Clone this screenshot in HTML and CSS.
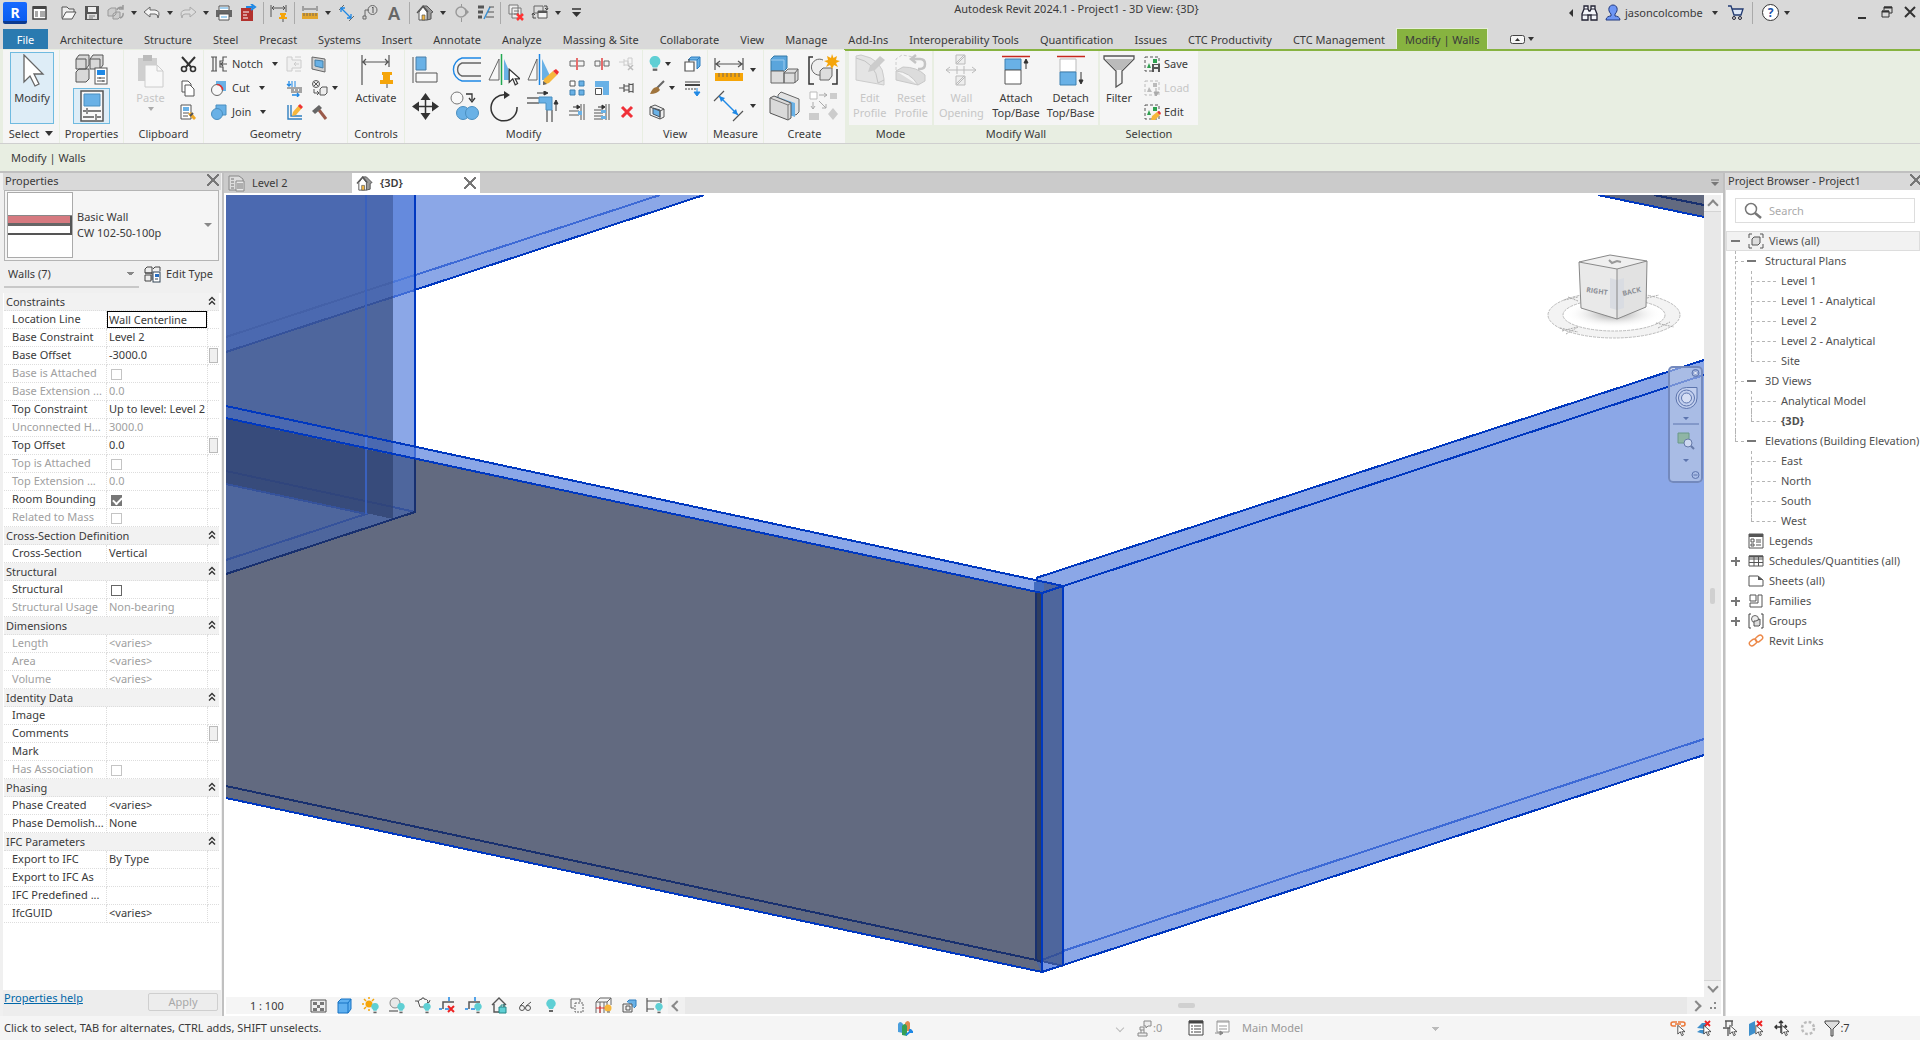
FILE: index.html
```html
<!DOCTYPE html>
<html lang="en">
<head>
  <meta charset="UTF-8">
  <title>Autodesk Revit 2024.1 - Project1 - 3D View: {3D}</title>
  <link rel="stylesheet" href="styles.css">
</head>
<body>
  <svg class="sprite" aria-hidden="true">
    <symbol id="cursor" viewBox="0 0 10 15"><path d="M1 1v11l3-3 2 5 2-1-2-4h4z" fill="#fff" stroke="#333"/></symbol>
    <symbol id="bulb" viewBox="0 0 10 14"><path d="M5 0a4.5 4.5 0 0 1 3 8l-1 2H3L2 8a4.5 4.5 0 0 1 3-8z" fill="#5fcfd4"/><path d="M3 11h4v2H3z" fill="#666"/></symbol>
    <symbol id="house" viewBox="0 0 18 18"><path d="M7 2h4l6 6-2 1v6l-4 1V8z" fill="#999" stroke="#555"/><path d="M3 8v8h8V8L7 3z" fill="#fff" stroke="#555"/><path d="M1 9l6-7 5 6" fill="none" stroke="#555" stroke-width="1.3"/><path d="M6 11h3v5H6z" fill="#f5b942" stroke="#555" stroke-width=".7"/></symbol>
    <symbol id="up2" viewBox="0 0 8 10"><path d="M1 4.5l3-3 3 3M1 8.5l3-3 3 3" fill="none" stroke="#333" stroke-width="1.4"/></symbol>
  </svg>

  <header class="titlebar">
    <nav class="qat">
      <button class="logo" aria-label="Revit">R</button>
      <button class="q" aria-label="Home"><svg width="15" height="15"><path d="M1 2h13v12H1z" fill="#fff" stroke="#444" stroke-width="1.5"/><path d="M1 1h13v3H1z" fill="#444"/><path d="M3 7h3M3 9h3M3 11h3M8 7h5M8 9h5M8 11h5" stroke="#555"/></svg></button>
      <button class="q q-first" aria-label="Open"><svg width="17" height="16"><path d="M2 13V2h5l2 2h5v3" fill="#eee" stroke="#555"/><path d="M2 14l4-7h10l-4 7z" fill="#f8f8f8" stroke="#555"/></svg></button>
      <button class="q" aria-label="Save"><svg width="16" height="16"><path d="M1 1h14v14H1z" fill="#555"/><path d="M4 2h8v5H4z" fill="#eee"/><path d="M3 9h10v5H3z" fill="#ddd"/><path d="M5 11h6M5 13h4" stroke="#777"/></svg></button>
      <button class="q" aria-label="Synchronize"><svg width="18" height="16"><path d="M1 5l3-2h5v6l-2 2H1zM6 9l3-2h4v5l-2 2H6z" fill="#ccc" stroke="#999"/><path d="M10 5a4 4 0 0 1 6-2M16 0v4h-4M16 8a4 4 0 0 1-3 5" fill="none" stroke="#999" stroke-width="1.5"/></svg></button>
      <button class="caret" aria-label="Synchronize options"></button>
      <button class="q" aria-label="Undo"><svg width="18" height="14"><path d="M7 1L1 6l6 5V8h5q3 0 3 4 3-7-3-8H7z" fill="#f4f4f4" stroke="#666"/></svg></button>
      <button class="caret" aria-label="Undo options"></button>
      <button class="q" aria-label="Redo"><svg width="18" height="14"><path d="M11 1l6 5-6 5V8H6q-3 0-3 4-3-7 3-8h5z" fill="#ddd" stroke="#aaa"/></svg></button>
      <button class="caret" aria-label="Redo options"></button>
      <button class="q" aria-label="Print"><svg width="18" height="16"><path d="M4 1h10v5H4z" fill="#fff" stroke="#555"/><path d="M1 5h16v7H1z" fill="#666"/><path d="M4 9h10v6H4z" fill="#fff" stroke="#555"/><path d="M5 3h8M6 12h6" stroke="#4aa3e0"/></svg></button>
      <button class="q" aria-label="Export PDF"><svg width="17" height="18"><path d="M1 4h10l2 2v11H1z" fill="#b3312d"/><path d="M3 8h6M3 11h4M3 14h5" stroke="#fff"/><path d="M6 3h7M11 0l4 3-4 3" stroke="#1e88e5" fill="none" stroke-width="2"/></svg></button>
      <i class="sep"></i>
      <button class="q" aria-label="Activate Controls"><svg width="18" height="18"><path d="M1 1v12M16 1v7M2 4h13M4 2L2 4l2 2M13 2l2 2-2 2" fill="none" stroke="#555"/><path d="M10 9h6v2h-1v2h2v2H9v-2h2v-2h-1z" fill="#f5a50a"/><path d="M13 15v3" stroke="#555"/></svg></button>
      <i class="sep"></i>
      <button class="q" aria-label="Measure"><svg width="16" height="15"><path d="M1 1v5M15 1v5M2 4h12" stroke="#666"/><path d="M0 8h16v6H0z" fill="#e3a62c"/><path d="M2 8v3M5 8v3M8 8v3M11 8v3M14 8v3" stroke="#765"/></svg></button>
      <button class="caret" aria-label="Measure options"></button>
      <button class="q" aria-label="Aligned Dimension"><svg width="17" height="18"><path d="M1 6l5-5M11 17l5-5" stroke="#666"/><path d="M3 4l10 10M3 8V4h4M9 14h4v-4" fill="none" stroke="#1e88e5" stroke-width="1.3"/></svg></button>
      <button class="q" aria-label="Tag"><svg width="16" height="16"><path d="M1 11h3v3H1zM3 11V5h4" fill="none" stroke="#666"/><circle cx="10.5" cy="5" r="4.5" fill="none" stroke="#666"/><path d="M10 3l1-1v6" fill="none" stroke="#555"/></svg></button>
      <button class="q glyph-a" aria-label="Text">A</button>
      <i class="sep"></i>
      <button class="q" aria-label="Default 3D View"><svg width="18" height="18"><use href="#house"/></svg></button>
      <button class="caret" aria-label="3D View options"></button>
      <button class="q" aria-label="Section"><svg width="15" height="18"><path d="M7.5 0v3M7.5 14v4" stroke="#999"/><circle cx="7" cy="8" r="5" fill="none" stroke="#999" stroke-width="1.4"/><path d="M11 4l4 4-4 4z" fill="#999"/></svg></button>
      <button class="q" aria-label="Thin Lines"><svg width="17" height="16"><path d="M1 2h6M1 7h5M1 12h4" stroke="#555" stroke-width="3"/><path d="M7 14L13 2" stroke="#3a8fd0" stroke-width="1.5"/><path d="M12 2h5M11 7h6M9 12h8" stroke="#555"/></svg></button>
      <i class="sep"></i>
      <button class="q" aria-label="Close Inactive Views"><svg width="17" height="17"><path d="M1 1h9v9H1zM4 4h9v10H4z" fill="#eee" stroke="#777"/><path d="M6 7h5M6 10h5" stroke="#777"/><path d="M9 10l6 6M15 10l-6 6" stroke="#f33" stroke-width="2.5"/></svg></button>
      <button class="q" aria-label="Switch Windows"><svg width="18" height="17"><path d="M3 2h9v7H3z" fill="#ddd" stroke="#666"/><path d="M7 7h9v7H7z" fill="#f5f5f5" stroke="#555"/><path d="M7 7h9v2H7z" fill="#555"/><path d="M13 2h3v3M2 10v4h3M1 11l1-2 2 2M14 4l2 2 1-2" fill="none" stroke="#444"/></svg></button>
      <button class="caret" aria-label="Window list"></button>
      <button class="q" aria-label="Customize"><svg width="9" height="9"><path d="M0 1h9" stroke="#333" stroke-width="1.5"/><path d="M0 4h9L4.5 9z" fill="#333"/></svg></button>
    </nav>
    <h1>Autodesk Revit 2024.1 - Project1 - 3D View: {3D}</h1>
    <div class="account">
      <button class="left-tri" aria-label="Collapse search"></button>
      <button class="acc-icon" aria-label="Search"><svg width="17" height="16"><path d="M1 15V9l2-5V1h4v3l1 2h1l1-2V1h4v3l2 5v6h-6v-5H7v5z" fill="#f4f6fa" stroke="#223" stroke-width="1.3"/><path d="M3 4h4M10 4h4M1 10h6M10 10h6" stroke="#223"/></svg></button>
      <button class="acc-icon" aria-label="Profile"><svg width="16" height="17"><path d="M1 16c0-3 3-4 5-4v-2C2 6 4 1 8 1s6 5 2 9v2c2 0 5 1 5 4z" fill="#6e96f5" stroke="#223a80"/></svg></button>
      <button class="user">jasoncolcombe</button>
      <button class="caret small" aria-label="Account menu"></button>
      <button class="acc-icon cart" aria-label="App Store"><svg width="17" height="16"><path d="M1 1h3l3 9h7l2-6H5" fill="#dce6f6" stroke="#223a70" stroke-width="1.3"/><circle cx="7" cy="13" r="1.5" fill="none" stroke="#223"/><circle cx="13" cy="13" r="1.5" fill="none" stroke="#223"/></svg></button>
      <i class="sep"></i>
      <button class="acc-icon help" aria-label="Help">?</button>
      <button class="caret small" aria-label="Help menu"></button>
      <div class="winbtns">
        <button aria-label="Minimize"><svg width="12" height="14"><path d="M2 12h8" stroke="#333" stroke-width="2"/></svg></button>
        <button aria-label="Restore"><svg width="12" height="12"><path d="M3 4V1h8v6H8" fill="none" stroke="#333"/><path d="M1 5h7v6H1z" fill="none" stroke="#333"/><path d="M3 1.5h8M1 5.5h7" stroke="#333" stroke-width="2"/></svg></button>
        <button aria-label="Close"><svg width="12" height="12"><path d="M1 1l10 10M11 1L1 11" stroke="#333" stroke-width="2"/></svg></button>
      </div>
    </div>
  </header>

  <nav class="tabs">
    <button class="file">File</button>
    <button>Architecture</button><button>Structure</button><button>Steel</button><button>Precast</button><button>Systems</button><button>Insert</button><button>Annotate</button><button>Analyze</button><button>Massing &amp; Site</button><button>Collaborate</button><button>View</button><button>Manage</button><button>Add-Ins</button><button>Interoperability Tools</button><button>Quantification</button><button>Issues</button><button>CTC Productivity</button><button>CTC Management</button>
    <button class="current">Modify | Walls</button>
    <button class="minimize" aria-label="Minimize ribbon"><svg width="15" height="9"><rect x=".5" y=".5" width="14" height="8" rx="2" fill="#f5f5f5" stroke="#444"/><path d="M5 6l2.5-3L10 6z" fill="#333"/></svg></button>
    <button class="caret small" aria-label="Ribbon options"></button>
  </nav>

  <section class="ribbon">
    <div class="panel p-select">
      <div class="tools">
        <button class="big on"><svg width="32" height="34"><path d="M8 1v27l6-6 5 10 4-2-5-10h9z" fill="#fff" stroke="#666" stroke-width="1.3"/></svg><span>Modify</span></button>
      </div>
      <h2>Select <i class="tri"></i></h2>
    </div>
    <div class="panel p-props">
      <div class="tools stack">
        <button aria-label="Type Properties"><svg width="34" height="32"><g fill="#d8d8d8" stroke="#555"><path d="M1 5l3-4h10v10l-3 4H1zM15 5l3-4h10v10l-3 4H15zM1 18l3-3h10v10l-3 3H1z"/><path d="M1 5h10v10M15 5h10v9" fill="none"/><rect x="20" y="14" width="12" height="16" fill="#fff"/></g><path d="M22 16h8v5h-8z" fill="#1e88e5"/><path d="M22 24h8M22 27h8M25 23v2M28 26v2" stroke="#555"/></svg></button>
        <button class="on wide" aria-label="Properties"><svg width="26" height="32"><path d="M2 1h22v30H2z" fill="#f8f8f8" stroke="#555" stroke-width="1.5"/><path d="M5 4h16v12H5z" fill="#69b1e6" stroke="#4a8fc0"/><path d="M4 21h3M9 21h13M8 18v6M4 27h11M18 27h4M17 24v6" stroke="#555" stroke-width="1.3"/></svg></button>
      </div>
      <h2>Properties</h2>
    </div>
    <div class="panel p-clip">
      <div class="tools">
        <button class="big paste" disabled><svg width="28" height="34"><path d="M1 4h19v23H1z" fill="#cfcfcf"/><path d="M6 1h9v6H6z" fill="#bbb"/><path d="M8 11h12l6 6v16H8z" fill="#f8f8f8" stroke="#ccc"/><path d="M20 11v6h6" fill="none" stroke="#ccc"/></svg><span>Paste</span><i class="down"></i></button>
        <div class="col">
          <button aria-label="Cut to Clipboard"><svg width="17" height="17"><path d="M2 1l9 10M15 1L6 11" stroke="#333" stroke-width="2"/><circle cx="4" cy="13" r="2.5" fill="none" stroke="#333" stroke-width="1.6"/><circle cx="13" cy="13" r="2.5" fill="none" stroke="#333" stroke-width="1.6"/></svg></button>
          <button aria-label="Copy"><svg width="14" height="17"><path d="M1 1h6l3 3v8H1z" fill="#fff" stroke="#555"/><path d="M4 5h5l4 4v7H4z" fill="#fff" stroke="#555"/></svg></button>
          <button aria-label="Match Type"><svg width="17" height="17"><path d="M1 1h10v14H1z" fill="#fff" stroke="#555"/><path d="M3 3h6v4H3z" fill="#69b1e6"/><path d="M3 9h6M3 12h5" stroke="#555"/><path d="M8 10l3-2 5 6-2 2z" fill="#f0a928"/><path d="M13 9l-3 3" stroke="#555" stroke-width="2"/></svg></button>
        </div>
      </div>
      <h2>Clipboard</h2>
    </div>
    <div class="panel p-geom">
      <div class="tools">
        <div class="col labelled">
          <button><svg width="18" height="17"><path d="M1 1h6M1 15h6M3 1v14M6 1v14M17 1h-4v4h-3v6h3v4h4M17 8h-6M13 6l-2 2 2 2" fill="none" stroke="#555" stroke-width="1.2"/></svg><span>Notch</span><i class="down"></i></button>
          <button><svg width="18" height="17"><path d="M6 1h10v10h-4a5 5 0 0 0-6-5z" fill="#69b1e6"/><circle cx="7" cy="10" r="5.5" fill="#f8f8f8" stroke="#666"/><path d="M7 4.5a5.5 5.5 0 0 1 5.5 5.5" fill="none" stroke="#d33" stroke-width="1.6"/></svg><span>Cut</span><i class="down"></i></button>
          <button><svg width="18" height="17"><path d="M6 1h10v10H6z" fill="#69b1e6" stroke="#4a8fc0"/><circle cx="7" cy="10" r="5.5" fill="#69b1e6" stroke="#4a8fc0"/></svg><span>Join</span><i class="down"></i></button>
        </div>
        <div class="col">
          <button aria-label="Cope"><svg width="17" height="17"><path d="M1 1h5v3h9v8H6v3H1z" fill="#f0f0f0" stroke="#ccc"/><path d="M15 1H9M15 15H9M13 8H8M10 6L8 8l2 2" fill="none" stroke="#ccc"/></svg></button>
          <button aria-label="Wall Joins"><svg width="17" height="17"><path d="M3 1v5M1 4l2 2 2-2M6 15h7M11 13l2 2-2 2" fill="none" stroke="#1e88e5" stroke-width="1.3"/><path d="M6 1v6M9 1v6" stroke="#1e88e5"/><path d="M1 8h15M5 12h11" stroke="#555"/><path d="M5 10h11" stroke="#555" stroke-dasharray="3 1"/></svg></button>
          <button aria-label="Unjoin"><svg width="17" height="17"><path d="M2 1v14h14M5 1v11h11" fill="none" stroke="#2f7fc0" stroke-width="1.4"/><path d="M6 12l1-4 6-7 3 3-6 7z" fill="#f6b73c"/><path d="M12 2l2-2 3 3-2 2z" fill="#e33"/></svg></button>
        </div>
        <div class="col wide-col">
          <button aria-label="Wall Opening"><svg width="16" height="17"><path d="M1 1l13 2v13L1 13z" fill="#cfcfcf" stroke="#666"/><path d="M4 4l8 1v7l-8-2z" fill="#69b1e6" stroke="#4580a8"/></svg></button>
          <button aria-label="Split Face"><svg width="17" height="17"><circle cx="5" cy="4" r="3.5" fill="#eee" stroke="#555"/><path d="M3 2l4 4M7 2L3 6M3 9v4h4M6 11l2 2-2 2" fill="none" stroke="#555"/><path d="M9 9l2-2h5v6l-2 2H9z" fill="#eee" stroke="#555"/></svg><i class="down"></i></button>
          <button aria-label="Demolish"><svg width="17" height="17"><path d="M8 6l7 9" stroke="#9b5a4a" stroke-width="3"/><path d="M1 7l7-6 3 3-7 6z" fill="#666"/></svg></button>
        </div>
      </div>
      <h2>Geometry</h2>
    </div>
    <div class="panel p-ctrl">
      <div class="tools">
        <button class="big"><svg width="34" height="34"><path d="M3 1v30M30 1v12M4 8h25M7 5L4 8l3 3M26 5l3 3-3 3" fill="none" stroke="#555" stroke-width="1.2"/><path d="M23 18h10v3h-2v5h3v4H21v-4h3v-5h-1z" fill="#f5a50a"/><path d="M28 30v4" stroke="#555"/></svg><span>Activate</span></button>
      </div>
      <h2>Controls</h2>
    </div>
    <div class="panel p-modify">
      <div class="tools">
        <div class="grid4">
          <button aria-label="Align"><svg width="28" height="28"><path d="M1 1v26" stroke="#555"/><path d="M4 1h10v13H4z" fill="#69b1e6" stroke="#4a7fa8"/><path d="M4 17h21v9H4z" fill="#f8f8f8" stroke="#555"/></svg></button>
          <button aria-label="Offset"><svg width="32" height="26"><path d="M32 1H13a12 12 0 0 0 0 23h19" fill="none" stroke="#1e88e5" stroke-width="1.4"/><path d="M32 6H13a7 7 0 0 0 0 13h19" fill="none" stroke="#666" stroke-width="1.4"/></svg></button>
          <button aria-label="Mirror - Pick Axis"><svg width="32" height="32"><path d="M11 5v21H1z" fill="#f8f8f8" stroke="#666"/><path d="M16 5v21h9z" fill="#69b1e6"/><path d="M13.5 0v31" stroke="#20a850" stroke-width="1.5"/><use href="#cursor" x="20" y="14" width="12" height="18"/></svg></button>
          <button aria-label="Mirror - Draw Axis"><svg width="32" height="32"><path d="M10 5v21H1z" fill="#f8f8f8" stroke="#666"/><path d="M15 5v21h10z" fill="#69b1e6"/><path d="M12.5 0v31" stroke="#1e88e5" stroke-width="1.5"/><path d="M16 31l1-6 9-8 4 4-8 8z" fill="#f6b73c"/><path d="M26 17l3-2 3 3-2 3z" fill="#ee3030"/><path d="M16 31v-4l4 3z" fill="#666"/></svg></button>
          <button aria-label="Move"><svg width="27" height="27"><path d="M13.5 3v21M3 13.5h21" stroke="#333" stroke-width="1.5"/><path d="M13.5 0l5 7h-10zM13.5 27l5-7h-10zM0 13.5l7-5v10zM27 13.5l-7-5v10z" fill="#333"/></svg></button>
          <button aria-label="Copy"><svg width="30" height="30"><circle cx="7" cy="7" r="6" fill="#f8f8f8" stroke="#777"/><path d="M16 3h6v6M19 7l3 4 3-4" fill="none" stroke="#333" stroke-width="1.3"/><circle cx="13" cy="22" r="6.5" fill="#69b1e6" stroke="#4a8fc0"/><circle cx="22" cy="22" r="6.5" fill="#69b1e6" stroke="#4a8fc0"/></svg></button>
          <button aria-label="Rotate"><svg width="30" height="31"><path d="M17 4A13 13 0 1 0 28 16" fill="none" stroke="#333" stroke-width="1.5"/><path d="M15 0l6 4-6 4z" fill="#333"/></svg></button>
          <button aria-label="Trim/Extend to Corner"><svg width="32" height="31"><path d="M0 7h12M0 12h12M20 19v12M25 19v12" stroke="#666" stroke-width="1.4"/><path d="M12 6h13v13h-6v-7h-7z" fill="#69b1e6" stroke="#4a8fc0"/><path d="M10 2h10M17 0l4 2-4 2zM29 20V11M27 13l2-4 2 4z" fill="#333" stroke="#333"/></svg></button>
        </div>
        <div class="grid3">
          <button aria-label="Split Element"><svg width="16" height="12"><path d="M7 3H1v5h6M9 3h6v5H9" fill="none" stroke="#666"/><path d="M8 0v12" stroke="#d22" stroke-width="1.3"/></svg></button>
          <button aria-label="Split with Gap"><svg width="16" height="12"><path d="M1 3h5v5H1zM10 3h5v5h-5z" fill="none" stroke="#666"/><path d="M8 0v12" stroke="#d22" stroke-width="1.3"/></svg></button>
          <button aria-label="Unpin" disabled><svg width="16" height="14"><path d="M0 5h5M5 2v7M5 4h4v4H5M9 1h4v6H9z" fill="none" stroke="#ccc"/><path d="M9 8l5 5M14 8l-5 5" stroke="#bbb" stroke-width="1.5"/></svg></button>
          <button aria-label="Array"><svg width="16" height="16"><path d="M1 1h5v5H1z" fill="#fff" stroke="#555"/><path d="M10 1h5v5h-5zM1 10h5v5H1zM10 10h5v5h-5z" fill="#69b1e6" stroke="#3f80b0"/></svg></button>
          <button aria-label="Scale"><svg width="16" height="16"><path d="M1 1h14v14H9V7H1z" fill="#69b1e6"/><path d="M1.5 8.500h6v6h-6z" fill="#fff" stroke="#555"/></svg></button>
          <button aria-label="Pin"><svg width="16" height="12"><path d="M0 6h5M5 2v8M5 4h5v4H5M10 2q2 1 4 0v8q-2-1-4 0z" fill="#eee" stroke="#555" stroke-width="1.2"/></svg></button>
          <button aria-label="Trim/Extend Single"><svg width="16" height="16"><path d="M0 7h10M0 11h10M12 0v16M15 0v16" stroke="#555"/><path d="M9 7h4v4H9z" fill="#69b1e6"/><path d="M4 3h6M8 1l3 2-3 2z" stroke="#333" fill="#333"/></svg></button>
          <button aria-label="Trim/Extend Multiple"><svg width="16" height="16"><path d="M0 6h9M0 9h9M0 12h9M0 15h9M12 0v16M15 0v16" stroke="#555"/><path d="M7 6h5v3H7zM7 12h5v3H7z" fill="#69b1e6"/><path d="M4 3h6M8 1l3 2-3 2z" stroke="#333" fill="#333"/></svg></button>
          <button aria-label="Delete"><svg width="14" height="14"><path d="M2 2l10 10M12 2L2 12" stroke="#f03038" stroke-width="3"/></svg></button>
        </div>
      </div>
      <h2>Modify</h2>
    </div>
    <div class="panel p-view">
      <div class="tools">
        <div class="col wide-col">
          <button aria-label="Hide"><svg width="12" height="16"><use href="#bulb"/></svg><i class="down"></i></button>
          <button aria-label="Override Graphics"><svg width="16" height="16"><path d="M15 1L8 8" stroke="#666" stroke-width="2"/><path d="M9 7q-5-1-8 7 7 0 10-4z" fill="#a0743c"/></svg><i class="down"></i></button>
          <button aria-label="Section Box"><svg width="16" height="16"><path d="M1 3l5-2 9 4v8l-4 2-10-4z" fill="#eee" stroke="#555"/><path d="M4 4l7 2v7l-7-3z" fill="#69b1e6" stroke="#456"/><path d="M1 3l10 4v8M11 7l4-2" fill="none" stroke="#555"/></svg></button>
        </div>
        <div class="col">
          <button aria-label="Displace Elements"><svg width="17" height="17"><path d="M4 4l3-3h9l-3 3zM13 4l3-3v9l-3 3z" fill="#69b1e6" stroke="#2f7fc0"/><path d="M5 6V3M1 6h9v9H1z" fill="#fff" stroke="#555" stroke-width="1.2"/></svg></button>
          <button aria-label="Linework"><svg width="17" height="17"><path d="M1 2h15" stroke="#444"/><path d="M1 5h15" stroke="#444" stroke-width="2"/><path d="M1 9h11" stroke="#444" stroke-dasharray="2 1"/><path d="M13 8v5M10 12h6l-3 4z" fill="#1e88e5" stroke="#1e88e5"/></svg></button>
        </div>
      </div>
      <h2>View</h2>
    </div>
    <div class="panel p-measure">
      <div class="tools">
        <div class="pair">
          <button aria-label="Measure Between"><svg width="30" height="26"><path d="M1 1v12M29 1v12M2 7h26M6 4L2 7l4 3M24 4l4 3-4 3" fill="none" stroke="#555" stroke-width="1.2"/><path d="M1 16h28v8H1z" fill="#f6a508"/><path d="M5 16v4M9 16v4M13 16v4M17 16v4M21 16v4M25 16v4" stroke="#765"/></svg><i class="down"></i></button>
          <button aria-label="Aligned Dimension"><svg width="31" height="32"><path d="M1 11L11 1M20 31l10-10" stroke="#555" stroke-width="1.2"/><path d="M6 6l19 19" stroke="#1e88e5" stroke-width="1.4"/><path d="M6 6l6 2-4 4zM25 25l-6-2 4-4z" fill="#1e88e5"/></svg><i class="down"></i></button>
        </div>
      </div>
      <h2>Measure</h2>
    </div>
    <div class="panel p-create">
      <div class="tools">
        <div class="grid2">
          <button aria-label="Create Assembly"><svg width="30" height="30"><path d="M1 4l3-3h13v12l-3 3H1z" fill="#5aa5dc" stroke="#357ba8"/><path d="M1 5h13v11" fill="none" stroke="#9ccbee"/><path d="M1 16h13v12H1zM14 18l4-4h10v11l-4 3H14z" fill="#ddd" stroke="#666"/><path d="M14 18h11v10M25 18l3-4" fill="none" stroke="#666"/></svg></button>
          <button aria-label="Create Group"><svg width="32" height="32"><path d="M5 3H1v27h5M24 30h5V15" fill="none" stroke="#333" stroke-width="1.5"/><path d="M15 6a8 8 0 1 0-2 15" fill="#eee" stroke="#666"/><path d="M12 17l3-3h9v8l-3 4h-9z" fill="#ddd" stroke="#666"/><path d="M24 0l1.5 4L29 2l-1 4 4 1-4 2 2 4-4-2-2 4-2-4-4 2 2-4-4-2 4-1-1-4 4 2z" fill="#f5a50a"/></svg></button>
          <button aria-label="Create Parts"><svg width="32" height="30"><path d="M9 4l3-3 18 7v13l-3 3-18-7z" fill="#e2e2e2" stroke="#666"/><path d="M6 5l20 7v14L6 19z" fill="#69b1e6"/><path d="M1 7l4-2 17 7v15l-3 2L1 22z" fill="#dadada" stroke="#555"/><path d="M1 7l18 7v15M19 14l3-2" fill="none" stroke="#777"/></svg></button>
          <button aria-label="Create Similar" disabled><svg width="32" height="30"><path d="M2 1h7v7H2z" fill="#fff" stroke="#bbb"/><path d="M22 2h7v6h-7zM1 22h10v7H1zM25 17l5 6-5 6-5-6z" fill="#ccc"/><path d="M11 4h8M16 2l3 2-3 2M5 11v7M3 15l2 3 2-3M11 10l7 7M18 13v4h-4" fill="none" stroke="#aaa"/></svg></button>
        </div>
      </div>
      <h2>Create</h2>
    </div>
    <div class="panel p-mode context">
      <div class="tools">
        <button class="big" disabled><svg width="32" height="34"><path d="M2 2l5-1q22 4 23 24v6L2 26z" fill="#e4e4e4" stroke="#ccc"/><path d="M2 4q20 4 22 25M24 29l6-3" fill="none" stroke="#c4c4c4"/><path d="M14 18l2-6L26 2l5 4-10 10z" fill="#ccc"/></svg><span>Edit<br>Profile</span></button>
        <button class="big" disabled><svg width="32" height="34"><path d="M1 17q14 1 22 14L1 26zM23 31l7-4v-6q-8-8-22-8l-7 4" fill="#dcdcdc" stroke="#c8c8c8"/><path d="M1 16V5l6-4 12 2" fill="none" stroke="#ccc" stroke-dasharray="3 2"/><path d="M21 1l-5 4 5 4M17 5h8q5 0 5 5t-5 5h-2" fill="none" stroke="#c4c4c4" stroke-width="2.5"/></svg><span>Reset<br>Profile</span></button>
      </div>
      <h2>Mode</h2>
    </div>
    <div class="panel p-wall context">
      <div class="tools">
        <button class="big w54" disabled><svg width="32" height="34"><path d="M11 1h9v9h-9zM11 22h9v9h-9z" fill="#eee" stroke="#bbb"/><path d="M11 9l8-8M12 10l8-8M11 30l8-8M12 31l8-8M1 16h30M5 13l-4 3 4 3M27 13l4 3-4 3M12 12v8M19 12v8" fill="none" stroke="#bbb"/></svg><span>Wall<br>Opening</span></button>
        <button class="big w54"><svg width="32" height="34"><path d="M2 2.5h28" stroke="#c8281e" stroke-width="1.5"/><path d="M5 5h16v11H5z" fill="#69b1e6" stroke="#3f80b0"/><path d="M5 16h16v14H5z" fill="#fff" stroke="#555"/><path d="M26 15V6M24 9l2-4 2 4z" fill="#333" stroke="#333"/></svg><span>Attach<br>Top/Base</span></button>
        <button class="big w54"><svg width="32" height="34"><path d="M2 2.5h28" stroke="#c8281e" stroke-width="1.5"/><path d="M5 5h16v13H5z" fill="#fff" stroke="#bbb"/><path d="M5 18h16v13H5z" fill="#69b1e6" stroke="#3f80b0"/><path d="M26 18v11M24 26l2 4 2-4z" fill="#333" stroke="#333"/></svg><span>Detach<br>Top/Base</span></button>
      </div>
      <h2>Modify Wall</h2>
    </div>
    <div class="panel p-sel context">
      <div class="tools">
        <button class="big"><svg width="32" height="34"><path d="M1 2h30v3L19 17v12l-6 4V17L1 5z" fill="#f4f4f4" stroke="#555" stroke-width="1.3"/><path d="M2 5h28L19 16h-6z" fill="#bbb"/></svg><span>Filter</span></button>
        <div class="col labelled">
          <button><svg width="17" height="17"><path d="M1 1h14v14H1z" fill="none" stroke="#555" stroke-dasharray="3 2"/><path d="M9 3h4v4H9zM3 12l2-5 2 5z" fill="#2fa050"/><path d="M8 8h8v8H8z" fill="#555"/><path d="M10 9h4v2h-4zM10 13h4v3h-4z" fill="#eee"/></svg><span>Save</span></button>
          <button disabled><svg width="17" height="17"><path d="M1 1h14v14H1z" fill="none" stroke="#bbb" stroke-dasharray="3 2"/><path d="M9 3h4v4H9zM3 12l2-5 3 5z" fill="#bbb"/><path d="M12 8v6M10 12l2 4 3-4z" fill="#aaa" stroke="#aaa"/></svg><span>Load</span></button>
          <button><svg width="17" height="17"><path d="M1 1h14v14H1z" fill="none" stroke="#555" stroke-dasharray="3 2"/><path d="M9 3h4v4H9zM3 11l2-5 2 5z" fill="#2fa050"/><path d="M7 16l1-4 5-4 3 3-5 5z" fill="#f6b73c"/><path d="M13 8l2-1 2 2-1 2z" fill="#e33"/></svg><span>Edit</span></button>
        </div>
      </div>
      <h2>Selection</h2>
    </div>
  </section>

  <div class="options">Modify | Walls</div>

  <main class="workspace">
    <aside class="properties">
      <header class="pane-head">Properties <button class="x" aria-label="Close Properties"></button></header>
      <button class="type-selector">
        <svg width="66" height="66"><rect x=".5" y=".5" width="65" height="65" fill="#fff" stroke="#aaa"/><path d="M1 24h64v7H1z" fill="#d67a80"/><path d="M1 23.5h64" stroke="#888"/><path d="M1 32.5h64" stroke="#666" stroke-width="3"/><path d="M1 42h63V24" fill="none" stroke="#555" stroke-width="2"/></svg>
        <span>Basic Wall<br>CW 102-50-100p</span>
        <i class="down"></i>
      </button>
      <div class="filter-row">
        <select aria-label="Element filter"><option>Walls (7)</option></select>
        <button class="edit-type"><svg width="17" height="17"><path d="M1 3l2-2h5v6H1zM9 3l2-2h5v4M1 9h6v6H1zM1 7h7v7" fill="#eee" stroke="#444"/><rect x="9" y="6" width="7" height="10" fill="#fff" stroke="#345"/><path d="M11 8h4v3h-4z" fill="#2a6fc0"/><path d="M11 13h3" stroke="#345"/></svg> Edit Type</button>
      </div>
      <div class="grid-wrap">
        <table class="props">
          <colgroup><col class="c1"><col class="c2"><col class="c3"></colgroup>
          <tr class="group"><th colspan="2">Constraints</th><td><svg width="8" height="10"><use href="#up2"/></svg></td></tr>
          <tr><td><label for="locline">Location Line</label></td><td class="edit"><input id="locline" type="text" value="Wall Centerline"></td><td></td></tr>
          <tr><td>Base Constraint</td><td>Level 2</td><td></td></tr>
          <tr><td>Base Offset</td><td>-3000.0</td><td><button class="assoc" aria-label="Associate Base Offset"></button></td></tr>
          <tr class="off"><td><label for="c1">Base is Attached</label></td><td><input id="c1" type="checkbox" disabled></td><td></td></tr>
          <tr class="off"><td>Base Extension ...</td><td>0.0</td><td></td></tr>
          <tr><td>Top Constraint</td><td>Up to level: Level 2</td><td></td></tr>
          <tr class="off"><td>Unconnected H...</td><td>3000.0</td><td></td></tr>
          <tr><td>Top Offset</td><td>0.0</td><td><button class="assoc" aria-label="Associate Top Offset"></button></td></tr>
          <tr class="off"><td><label for="c2">Top is Attached</label></td><td><input id="c2" type="checkbox" disabled></td><td></td></tr>
          <tr class="off"><td>Top Extension ...</td><td>0.0</td><td></td></tr>
          <tr><td><label for="c3">Room Bounding</label></td><td><input id="c3" type="checkbox" checked></td><td></td></tr>
          <tr class="off"><td><label for="c4">Related to Mass</label></td><td><input id="c4" type="checkbox" disabled></td><td></td></tr>
          <tr class="group"><th colspan="2">Cross-Section Definition</th><td><svg width="8" height="10"><use href="#up2"/></svg></td></tr>
          <tr><td>Cross-Section</td><td>Vertical</td><td></td></tr>
          <tr class="group"><th colspan="2">Structural</th><td><svg width="8" height="10"><use href="#up2"/></svg></td></tr>
          <tr><td><label for="c5">Structural</label></td><td><input id="c5" type="checkbox"></td><td></td></tr>
          <tr class="off"><td>Structural Usage</td><td>Non-bearing</td><td></td></tr>
          <tr class="group"><th colspan="2">Dimensions</th><td><svg width="8" height="10"><use href="#up2"/></svg></td></tr>
          <tr class="off"><td>Length</td><td>&lt;varies&gt;</td><td></td></tr>
          <tr class="off"><td>Area</td><td>&lt;varies&gt;</td><td></td></tr>
          <tr class="off"><td>Volume</td><td>&lt;varies&gt;</td><td></td></tr>
          <tr class="group"><th colspan="2">Identity Data</th><td><svg width="8" height="10"><use href="#up2"/></svg></td></tr>
          <tr><td>Image</td><td></td><td></td></tr>
          <tr><td>Comments</td><td></td><td><button class="assoc" aria-label="Associate Comments"></button></td></tr>
          <tr><td>Mark</td><td></td><td></td></tr>
          <tr class="off"><td><label for="c6">Has Association</label></td><td><input id="c6" type="checkbox" disabled></td><td></td></tr>
          <tr class="group"><th colspan="2">Phasing</th><td><svg width="8" height="10"><use href="#up2"/></svg></td></tr>
          <tr><td>Phase Created</td><td>&lt;varies&gt;</td><td></td></tr>
          <tr><td>Phase Demolish...</td><td>None</td><td></td></tr>
          <tr class="group"><th colspan="2">IFC Parameters</th><td><svg width="8" height="10"><use href="#up2"/></svg></td></tr>
          <tr><td>Export to IFC</td><td>By Type</td><td></td></tr>
          <tr><td>Export to IFC As</td><td></td><td></td></tr>
          <tr><td>IFC Predefined ...</td><td></td><td></td></tr>
          <tr><td>IfcGUID</td><td>&lt;varies&gt;</td><td></td></tr>
        </table>
      </div>
      <footer class="props-foot"><a href="#help">Properties help</a><button disabled>Apply</button></footer>
    </aside>

    <section class="viewport">
      <nav class="view-tabs">
        <button class="vtab"><svg width="17" height="17"><path d="M1 1h10l4 3v11H1z" fill="#ddd" stroke="#888"/><path d="M3 4h3M3 7h3M3 10h3M3 13h3" stroke="#777"/><path d="M8 6h8v10H8z" fill="#e8e8e8" stroke="#888"/><path d="M10 8v6M12 8v6M14 8v6" stroke="#777"/></svg>Level 2</button>
        <button class="vtab active"><svg width="17" height="17"><use href="#house"/></svg>{3D}<i class="x"></i></button>
        <button class="tab-list" aria-label="Tab list"><svg width="8" height="8"><path d="M0 1h8" stroke="#777"/><path d="M0 3h8L4 7z" fill="#777"/></svg></button>
      </nav>
      <div class="view-body">
        <div class="canvas">
          <svg class="model" viewBox="226 195 1478 802" preserveAspectRatio="xMidYMid slice" shape-rendering="crispEdges">
            <!-- far wall, top left -->
            <path d="M226 195h478L226 352z" fill="#8ba7e7"/>
            <path d="M226 337L660 195" stroke="#3d6ad6"/>
            <path d="M226 352L704 195" stroke="#0038c0"/>
            <!-- long wall running to the corner -->
            <path d="M226 406l837 180-21 7L226 418z" fill="#8ba7e7"/>
            <path d="M226 418l816 175v380L226 798z" fill="#626a80"/>
            <path d="M226 786l810 174" stroke="#18306f"/>
            <!-- near wall, left -->
            <path d="M226 195h167v102l-167 55z" fill="#4b69b0"/>
            <path d="M226 352l167-55v145L226 406z" fill="#4e669d"/>
            <path d="M393 195h22v95l-22 7z" fill="#658add"/>
            <path d="M393 297l22-7v157l-22-5z" fill="#8ba7e7"/>
            <path d="M226 406l167 36v12l-167-36z" fill="#4b69b0"/>
            <path d="M393 442l22 5v12l-22-5z" fill="#658add"/>
            <path d="M226 418l189 41v53l-189 62z" fill="#4e669d"/>
            <path d="M226 419l167 36v64l-27-6-140-29z" fill="#374b7b"/>
            <path d="M226 337l167-55" stroke="#4461a8"/>
            <path d="M393 282l22-7" stroke="#4b78db"/>
            <path d="M226 352l167-55" stroke="#35529b"/>
            <path d="M393 297l22-7" stroke="#3d6ad6"/>
            <path d="M226 471l167 36" stroke="#30457c"/>
            <path d="M393 507l22 5M226 484l140 30-140 46" stroke="#35529b"/>
            <path d="M366 195v241M366 448v66" stroke="#3a61bd"/>
            <path d="M366 437v11" stroke="#4b78db"/>
            <path d="M226 574l189-62v-53" stroke="#18306f"/>
            <path d="M415 195v252" stroke="#0038c0"/>
            <path d="M415 447v12" stroke="#3d6ad6"/>
            <!-- right wall -->
            <path d="M1036 578l668-218v395l-662 217V593z" fill="#8ba7e7"/>
            <path d="M1063 951l641-212" stroke="#3d6ad6"/>
            <!-- corner -->
            <path d="M1036 580l27 6v380l-21-5v12l-6-12z" fill="#4e669d"/>
            <path d="M1042 961l21 5-21 7z" fill="#7595e2"/>
            <path d="M1036 592h6v369h-6z" fill="#2f3d5e"/>
            <path d="M1036 592v368l6 2" stroke="#18306f"/>
            <path d="M1042 960l21-8M1042 961l21 5" stroke="#35529b"/>
            <path d="M1034 582h10v9h-10z" fill="#416bc0"/>
            <path d="M1042 973V593l21-7v380M226 418l816 175L1704 375M226 406l837 180M1036 578l668-218M226 798l816 174 662-217" stroke="#0038c0"/>
            <!-- wall clipped by the top edge -->
            <path d="M1598 195h106v22z" fill="#626a80"/>
            <path d="M1654 195l50 10" stroke="#18306f"/>
            <path d="M1598 195l106 22" stroke="#0038c0"/>
          </svg>
          <svg class="viewcube" viewBox="1546 250 136 94" width="136" height="94">
            <defs><radialGradient id="shade"><stop offset="0" stop-color="#999"/><stop offset="1" stop-color="#fff" stop-opacity="0"/></radialGradient></defs>
            <ellipse cx="1614" cy="315" rx="66" ry="23" fill="#f3f3f3" stroke="#bbb" stroke-dasharray="3 1"/>
            <ellipse cx="1614" cy="315" rx="51" ry="16" fill="#fff" stroke="#bbb" stroke-dasharray="3 1"/>
            <ellipse cx="1614" cy="314" rx="48" ry="14" fill="url(#shade)"/>
            <g stroke="#aaa" stroke-dasharray="2 1"><path d="M1560 328l18 4M1562 331l15-4M1566 334l12-7M1656 323l18 4M1658 328l12-6M1564 300l14-3M1568 297l10 4M1647 298l12-3"/></g>
            <path d="M1579 262l38 7v50l-36-11z" fill="#e9e9e9"/>
            <path d="M1617 269l30-8-1 46-29 12z" fill="#e2e2e2"/>
            <path d="M1579 262l31-7 37 6-30 8z" fill="#efefef"/>
            <path d="M1610 278l7 2 7-2v30l-7 2-7-2z" fill="#d9dce2"/>
            <path d="M1579 262l31-7 37 6-1 46-29 12-36-11zM1579 262l38 7 30-8M1617 269v50" fill="none" stroke="#888"/>
            <path d="M1609 260l3 3 5-2 4 1" fill="none" stroke="#999" stroke-width="2"/>
            <text x="1586" y="292" transform="rotate(8 1586 292)">RIGHT</text>
            <text x="1623" y="296" transform="rotate(-13 1623 296)">BACK</text>
          </svg>
          <div class="navbar">
            <svg viewBox="0 0 35 117" width="35" height="117">
              <g fill="none" stroke="#5d75ae"><circle cx="27.5" cy="7" r="3.5" fill="#90a4d4"/><path d="M26 5.5l3 3M29 5.5l-3 3" stroke="#fff"/><path d="M8 32a10.500 10.500 0 0 1 10.500-10.500H29V32a10.500 10.500 0 1 1-21 0z" fill="#c2cfee"/><circle cx="18.5" cy="32" r="8"/><circle cx="18.5" cy="32" r="5" fill="#d5def4"/><path d="M5 58h26"/><circle cx="27.5" cy="109" r="3.5"/><path d="M25.5 109h4"/></g>
              <path d="M15 51h6l-3 3zM15 93h6l-3 3z" fill="#5d75ae"/>
              <path d="M10 67h11v10H10z" fill="#8fb5a5" stroke="#6a9a88"/><circle cx="20" cy="77" r="4" fill="#cdd8f0" stroke="#667aa8"/><path d="M23 80l3 3" stroke="#667aa8" stroke-width="2"/>
            </svg>
          </div>
        </div>
        <div class="vscroll"><i class="sb up"></i><i class="thumb"></i><i class="sb dn"></i></div>
      </div>
      <footer class="view-bar">
        <div class="view-ctrl">
        <button class="scale">1 : 100</button>
        <button aria-label="Detail Level"><svg width="18" height="14"><path d="M1 1h15v12H1z" fill="#eee" stroke="#555"/><path d="M3 3h4v3H3zM10 3h4v3h-4zM7 6h3v3H7zM3 9h4v3H3zM10 9h4v3h-4z" fill="#777"/></svg></button>
        <button aria-label="Visual Style"><svg width="15" height="16"><path d="M1 4l3-3h10v10l-3 4H1z" fill="#5fb0f0" stroke="#1673c4"/><path d="M1 5h10v10M11 5l3-4" fill="none" stroke="#1673c4"/></svg></button>
        <button aria-label="Sun Path"><svg width="17" height="17"><circle cx="7" cy="7" r="3.5" fill="#f5a50a"/><path d="M7 0v2M7 12v2M0 7h2M2 2l2 2M12 2l-2 2M2 12l2-2" stroke="#f5a50a" stroke-width="1.5"/><use href="#bulb" x="9" y="6" width="8" height="11"/></svg></button>
        <button aria-label="Shadows"><svg width="17" height="17"><circle cx="7" cy="6" r="5" fill="#e8e8e8" stroke="#888"/><path d="M1 14h9" stroke="#999" stroke-width="2"/><use href="#bulb" x="9" y="6" width="8" height="11"/></svg></button>
        <button aria-label="Rendering"><svg width="17" height="17"><path d="M1 4h3l2 6h6l2-6q-1-2-4-2V1H8v1Q5 2 4 5M13 6q3 0 3-3" fill="#f8f8f8" stroke="#555"/><use href="#bulb" x="9" y="6" width="8" height="11"/></svg></button>
        <button aria-label="Crop View"><svg width="17" height="17"><path d="M4 12V5h11" fill="none" stroke="#555" stroke-width="1.5"/><path d="M10 0v4M0 12h3M6 12h4" stroke="#1e88e5" stroke-width="1.5"/><path d="M9 9l6 6M15 9l-6 6" stroke="#e22" stroke-width="2"/></svg></button>
        <button aria-label="Crop Region"><svg width="17" height="17"><path d="M4 12V5h11" fill="none" stroke="#555" stroke-width="1.5"/><path d="M10 0v4M0 12h3M6 12h4" stroke="#1e88e5" stroke-width="1.5"/><use href="#bulb" x="9" y="6" width="8" height="11"/></svg></button>
        <button aria-label="Lock 3D View"><svg width="17" height="17"><path d="M1 8l7-7 7 7M3 7v8h5M13 7v3" fill="#f4f4f4" stroke="#555" stroke-width="1.4"/><path d="M8 10h7v6H8z" fill="#5fcfd4" stroke="#288"/><path d="M10 10V8h4" fill="none" stroke="#288"/></svg></button>
        <button aria-label="Temporary Hide"><svg width="15" height="12"><circle cx="4" cy="8" r="2.5" fill="none" stroke="#555"/><circle cx="10" cy="8" r="2.5" fill="none" stroke="#555"/><path d="M2 6l4-4M8 6l5-4" stroke="#555"/></svg></button>
        <button aria-label="Reveal Hidden"><svg width="10" height="14"><use href="#bulb"/></svg></button>
        <button aria-label="Temporary View Properties"><svg width="15" height="15"><path d="M1 1h9v3M1 1v9h3" fill="none" stroke="#666"/><path d="M5 5h8v9H5z" fill="none" stroke="#666" stroke-dasharray="2 1"/></svg></button>
        <button aria-label="Analytical Model"><svg width="17" height="17"><path d="M1 5l4-4h11v7M1 5h11v3M1 5v11M5 5v11M9 5v11M12 5l4-4" fill="none" stroke="#666"/><path d="M1 11h10M5 9v7" stroke="#d33"/><circle cx="13" cy="11" r="3.5" fill="#f6b73c"/><path d="M12 15h3" stroke="#555"/></svg></button>
        <button aria-label="Displacement Sets"><svg width="15" height="14"><path d="M5 3l2-2h7v6l-2 2" fill="#69b1e6" stroke="#2f7fc0"/><path d="M1 5h9v8H1zM4 7h4v4H4z" fill="#eee" stroke="#555"/></svg></button>
        <button aria-label="Constraints"><svg width="17" height="17"><path d="M1 1v14M15 1v5M1 4h14M1 12h7" fill="none" stroke="#555" stroke-width="1.2"/><use href="#bulb" x="9" y="6" width="8" height="11"/></svg></button>
        </div>
        <div class="hscroll"><i class="sb lt"></i><i class="thumb"></i><i class="sb rt"></i></div>
        <i class="grip"></i>
      </footer>
    </section>

    <aside class="browser">
      <header class="pane-head">Project Browser - Project1 <button class="x" aria-label="Close Project Browser"></button></header>
      <label class="search"><svg width="18" height="18"><circle cx="7" cy="7" r="5.5" fill="none" stroke="#777" stroke-width="1.5"/><path d="M11 11l6 5" stroke="#777" stroke-width="2.5"/></svg><input type="text" placeholder="Search" aria-label="Search"></label>
      <ul class="tree">
        <li><div class="node root"><b class="minus"></b><svg width="16" height="16"><path d="M4 1H1v4M12 1h3v4M4 15H1v-4M12 15h3v-4" fill="none" stroke="#555"/><path d="M4 6l2-2h6v6l-2 2H4z" fill="#ddd" stroke="#555"/></svg>Views (all)</div>
          <ul class="lvl1">
            <li><div class="node"><b class="minus"></b>Structural Plans</div>
              <ul class="lvl2"><li>Level 1</li><li>Level 1 - Analytical</li><li>Level 2</li><li>Level 2 - Analytical</li><li>Site</li></ul></li>
            <li><div class="node"><b class="minus"></b>3D Views</div>
              <ul class="lvl2"><li>Analytical Model</li><li><strong>{3D}</strong></li></ul></li>
            <li><div class="node"><b class="minus"></b>Elevations (Building Elevation)</div>
              <ul class="lvl2"><li>East</li><li>North</li><li>South</li><li>West</li></ul></li>
          </ul>
        </li>
        <li><div class="node"><b></b><svg width="16" height="16"><path d="M1 1h14v14H1z" fill="#fff" stroke="#555"/><path d="M1 2.5h14" stroke="#555" stroke-width="3"/><path d="M3 6h3v3H3zM3 11h3v2H3zM8 7h5M8 9h5M8 12h5" fill="none" stroke="#555"/></svg>Legends</div></li>
        <li><div class="node"><b class="plus"></b><svg width="16" height="16"><path d="M1 3h14v10H1zM1 6h14M1 9.5h14M6 3v10M10.5 3v10" fill="#fff" stroke="#555"/><path d="M1 3.5h14" stroke="#555" stroke-width="2"/></svg>Schedules/Quantities (all)</div></li>
        <li><div class="node"><b></b><svg width="16" height="16"><path d="M1 3h9l5 4v6H1z" fill="#fff" stroke="#555"/><path d="M10 3v4h5z" fill="#555"/></svg>Sheets (all)</div></li>
        <li><div class="node"><b class="plus"></b><svg width="16" height="16"><path d="M2 2h6v6H2zM10 2h4v12H2v-4h8z" fill="#fff" stroke="#555"/></svg>Families</div></li>
        <li><div class="node"><b class="plus"></b><svg width="16" height="16"><path d="M3 1H1v14h2M13 1h2v14h-2" fill="none" stroke="#444"/><circle cx="7" cy="6" r="3.5" fill="#eee" stroke="#666"/><path d="M6 8h2l4-2v6l-1 1H6z" fill="#ddd" stroke="#555"/></svg>Groups</div></li>
        <li><div class="node"><b></b><svg width="16" height="16"><g fill="none" stroke="#ec8848" stroke-width="1.4"><rect x="1" y="7" width="8" height="5" rx="2.5" transform="rotate(-40 5 9.5)"/><rect x="7" y="3" width="8" height="5" rx="2.5" transform="rotate(-40 11 5.5)"/></g></svg>Revit Links</div></li>
      </ul>
    </aside>
  </main>

  <footer class="status">
    <span class="hint">Click to select, TAB for alternates, CTRL adds, SHIFT unselects.</span>
    <button class="st people" aria-label="Worksharing"><svg width="17" height="17"><path d="M1 4q2-4 5 0v9l-5-1z" fill="#4a9fdd"/><path d="M8 3q3-4 5 0v8H8z" fill="#e08a50"/><path d="M5 6q3-4 5 0v10l-5-1z" fill="#35a055"/><path d="M9 15l6-5M13 9v3h3" stroke="#1e88e5" stroke-width="2" fill="none"/></svg></button>
    <div class="st-mid">
      <i class="chev"></i>
      <span class="requests"><svg width="16" height="17"><path d="M7 1h7v5h-3l-2 2V6H7zM3 7h4v3H3zM1 16v-3h9v3zM4 10v3M7 10v3" fill="#eee" stroke="#888"/></svg>:0</span>
      <button class="st" aria-label="Design Options"><svg width="16" height="16"><path d="M1 1h14v14H1z" fill="#fff" stroke="#444"/><path d="M1 2h14" stroke="#444" stroke-width="3"/><path d="M3 6h2M3 9h2M3 12h2M6 6h7M6 9h7M6 12h7" stroke="#444"/></svg></button>
      <button class="st" aria-label="Add to Set"><svg width="16" height="16"><path d="M3 1h12v11H3z" fill="#fff" stroke="#999"/><path d="M3 2h12M5 6h8M5 9h8" stroke="#999"/><path d="M1 13h8M6 11l3 2-3 2z" fill="#888" stroke="#888"/></svg></button>
      <select class="model-opt" aria-label="Active design option" disabled><option>Main Model</option></select>
    </div>
    <div class="st-right">
      <button class="st" aria-label="Select Links"><svg width="17" height="17"><path d="M7 2H3q-2 0-2 2t2 2h3M8 2h5q2 0 2 2t-2 2h-2M5 4h6" fill="none" stroke="#ec7838" stroke-width="1.5"/><use href="#cursor" x="7" y="4" width="8" height="13"/></svg></button>
      <button class="st" aria-label="Select Underlay"><svg width="17" height="17"><path d="M1 8l5-5h4v6zM1 12l3-2h7l-3 4z" fill="#3f90cc"/><path d="M9 1l5 5M14 1L9 6" stroke="#e22" stroke-width="1.8"/><use href="#cursor" x="7" y="4" width="8" height="13"/></svg></button>
      <button class="st" aria-label="Select Pinned"><svg width="17" height="17"><path d="M3 1h8M4 1v6M10 1v5M1 8h8M6 8v8" fill="none" stroke="#555" stroke-width="1.3"/><use href="#cursor" x="7" y="4" width="8" height="13"/></svg></button>
      <button class="st" aria-label="Select by Face"><svg width="17" height="17"><path d="M1 4l6-3v12l-6 3z" fill="#3f90cc"/><path d="M9 1l5 5M14 1L9 6" stroke="#e22" stroke-width="1.8"/><use href="#cursor" x="7" y="4" width="8" height="13"/></svg></button>
      <button class="st" aria-label="Drag Elements"><svg width="17" height="17"><path d="M7 1v12M1 7h12M5 3l2-2 2 2M3 5L1 7l2 2M11 5l2 2" fill="none" stroke="#333" stroke-width="1.4"/><use href="#cursor" x="7" y="4" width="8" height="13"/></svg></button>
      <button class="st" aria-label="Background Processes"><svg width="16" height="16"><circle cx="8" cy="8" r="6" fill="none" stroke="#bbb" stroke-width="2.5" stroke-dasharray="2.7 2"/></svg></button>
      <button class="st filter"><svg width="16" height="17"><path d="M1 1h14v2L9 9v7H7V9L1 3z" fill="#ddd" stroke="#444"/></svg>:7</button>
    </div>
  </footer>
</body>
</html>
```

FILE: styles.css
```css
* {
  box-sizing: border-box;
}
body {
  margin: 0;
  height: 100vh;
  display: flex;
  flex-direction: column;
  overflow: hidden;
  background: #f5f5f5;
  color: #3a3a3a;
  font: 11px/18px "Noto Sans", "Open Sans", sans-serif;
}
button, input, select {
  font: inherit;
  color: inherit;
  margin: 0;
  padding: 0;
  border: 0;
  background: none;
}
button:disabled {
  color: #c6c6c6;
}
h1, h2 {
  margin: 0;
  font-size: 11px;
  font-weight: normal;
}
ul {
  margin: 0;
  padding: 0;
  list-style: none;
}
svg {
  display: block;
  flex: none;
}
.sprite {
  position: absolute;
  width: 0;
  height: 0;
}

/* small arrows */
.caret, .down, .tri, .left-tri {
  display: flex;
  align-items: center;
  justify-content: center;
}
.caret::before, .down::before, .tri::before, .left-tri::before {
  content: "";
  border: 3px solid transparent;
  border-top: 4px solid #333;
  border-bottom: 0;
}
.left-tri::before {
  border: 4px solid transparent;
  border-right: 4px solid #333;
  border-left: 0;
}
.tri::before {
  border-width: 5px 4px 0;
}
button:disabled .down::before {
  border-top-color: #aaa;
}
.x {
  width: 12px;
  height: 12px;
  background:
    linear-gradient(45deg, transparent 44%, #777 44%, #777 57%, transparent 57%),
    linear-gradient(-45deg, transparent 44%, #777 44%, #777 57%, transparent 57%);
}

/* title bar */
.titlebar {
  display: flex;
  height: 29px;
  flex: none;
  background: #d9d9d9;
}
.qat {
  display: flex;
  align-items: center;
  height: 25px;
  padding-left: 3px;
}
.q {
  width: 24px;
  height: 24px;
  display: flex;
  align-items: center;
  justify-content: center;
}
.q-first {
  margin-left: 5px;
}
.logo {
  width: 24px;
  height: 22px;
  background: linear-gradient(#1769ff, #0a5cf0 85%, #0b3a90 85%);
  border-radius: 2px;
  color: #fff;
  font-weight: bold;
  font-size: 14px;
}
.glyph-a {
  font-size: 18px;
  font-weight: 600;
  color: #666;
}
.caret {
  width: 12px;
  height: 24px;
}
.sep {
  width: 1px;
  height: 22px;
  margin: 0 3px;
  background: #aaa;
}
.titlebar h1 {
  flex: 1;
  text-align: center;
  line-height: 18px;
}
.account {
  display: flex;
  align-items: center;
  height: 25px;
}
.left-tri {
  width: 12px;
}
.acc-icon {
  width: 24px;
  display: flex;
  justify-content: center;
}
.user {
  width: 84px;
  text-align: left;
}
.cart {
  width: 28px;
}
.help {
  width: 17px;
  height: 17px;
  margin: 0 2px 0 6px;
  border: 1px solid #333;
  border-radius: 50%;
  background: #fff;
  color: #2050a8;
  font-weight: bold;
  font-size: 12px;
  line-height: 15px;
}
.winbtns {
  display: flex;
  margin-left: 56px;
}
.winbtns button {
  width: 25px;
  display: flex;
  justify-content: center;
}
.winbtns button:last-child {
  width: 21px;
}

/* ribbon tabs */
.tabs {
  display: flex;
  height: 20px;
  flex: none;
  padding-left: 3px;
  background: #d9d9d9;
}
.tabs button {
  padding: 0 10px 0 11px;
  line-height: 19px;
  white-space: nowrap;
}
.tabs .file {
  width: 45px;
  margin-right: 1px;
  padding: 0;
  background: #2a7ab0;
  color: #fff;
}
.tabs .current {
  margin-left: 2px;
  padding: 0 8px;
  background: #87b340;
  outline: 1px solid #e6eedb;
}
.tabs .minimize {
  padding: 0 0 0 23px;
}
.tabs .caret {
  padding: 0;
  height: 20px;
}

/* ribbon */
.ribbon {
  display: flex;
  height: 95px;
  flex: none;
  padding: 1px 0 0 3px;
  background: linear-gradient(#87b340, #87b340) 844px 0 / 100% 2px no-repeat, #e8eee2;
  border-bottom: 1px solid #cfcfcf;
}
.panel {
  display: flex;
  flex-direction: column;
  margin-right: 1px;
  background: #f5f5f5;
}
.tools {
  display: flex;
  height: 75px;
  padding-top: 2px;
}
.panel h2 {
  display: flex;
  justify-content: center;
  gap: 6px;
  line-height: 17px;
}
.context {
  margin-top: 1px;
  margin-right: 2px;
}
.context .tools {
  height: 74px;
  padding-top: 1px;
}
.context h2 {
  flex: 1;
  background: #e8eee2;
}
.p-select { width: 56px; }
.p-props { width: 63px; }
.p-clip { width: 79px; }
.p-geom { width: 143px; }
.p-ctrl { width: 56px; }
.p-modify { width: 237px; }
.p-view { width: 64px; }
.p-measure { width: 55px; }
.p-create { width: 81px; }
.p-mode { width: 83px; margin-left: 3px; }
.p-wall { width: 164px; }
.p-sel { width: 98px; }
.tools button {
  display: flex;
  align-items: center;
  justify-content: center;
}
.tools .big {
  flex-direction: column;
  justify-content: flex-start;
  flex: 1;
  height: 72px;
  padding-top: 2px;
  line-height: 15px;
}
.tools .big svg {
  margin-bottom: 2px;
}
.big .down {
  height: 8px;
}
.p-select .tools {
  padding: 2px 5px 0 7px;
}
.p-select .big {
  padding-top: 1px;
}
.on {
  background: #deedf7;
  border: 1px solid #6fbae0;
}
.stack {
  flex-direction: column;
  align-items: center;
}
.stack button {
  width: 37px;
  height: 36px;
}
.paste {
  padding-left: 2px;
}
.col {
  display: grid;
  grid-auto-rows: 24px;
  width: 26px;
  align-content: start;
}
.p-clip .col {
  margin-right: 2px;
}
.wide-col {
  width: 40px;
}
.wide-col button {
  justify-content: flex-start;
  gap: 4px;
  padding-left: 4px;
}
.labelled {
  width: 78px;
}
.labelled button {
  justify-content: flex-start;
  gap: 4px;
  padding-left: 6px;
}
.labelled .down {
  margin-left: 5px;
}
.p-sel .labelled {
  width: 60px;
}
.p-sel .labelled button {
  gap: 3px;
}
.grid4 {
  display: grid;
  grid-template-columns: repeat(4, 39px);
  grid-auto-rows: 36px;
  margin-left: 1px;
}
.grid3 {
  display: grid;
  grid-template-columns: repeat(3, 25px);
  grid-auto-rows: 24px;
  margin-left: 2px;
}
.grid2 {
  display: grid;
  grid-template-columns: 39px 39px;
  grid-auto-rows: 36px;
  margin-left: 1px;
}
.pair {
  display: grid;
  grid-auto-rows: 36px;
  padding-left: 5px;
}
.pair button {
  gap: 6px;
}
.p-view .wide-col {
  padding-left: 2px;
  width: 36px;
}
.options {
  height: 29px;
  flex: none;
  padding-left: 11px;
  line-height: 27px;
  background: #e8eee2;
  border-bottom: 2px solid #c0c0c0;
}

/* workspace */
.workspace {
  flex: 1;
  min-height: 0;
  display: flex;
  background: #c0c0c0;
}
.pane-head {
  display: flex;
  justify-content: space-between;
  height: 17px;
  padding: 1px 2px 0;
  line-height: 14px;
  background: #d9d9d9;
}
.properties {
  width: 222px;
  padding: 0 1px 0 3px;
  display: flex;
  flex-direction: column;
  background: #f0f0f0;
}
.type-selector {
  display: flex;
  align-items: center;
  gap: 4px;
  width: 215px;
  height: 71px;
  margin-left: 1px;
  padding: 0 6px 2px 2px;
  border: 1px solid #b4b4b4;
  background: #f5f5f5;
  text-align: left;
  line-height: 16px;
}
.type-selector .down {
  margin-left: auto;
}
.type-selector .down::before {
  border-width: 4px 4px 0;
  border-top-color: #888;
}
.filter-row {
  display: flex;
  height: 32px;
}
.filter-row select {
  width: 135px;
  height: 27px;
  margin-left: 1px;
  padding-left: 4px;
  appearance: none;
  border-bottom: 2px solid #c8c8c8;
  background: linear-gradient(45deg, transparent 50%, #888 50%) 123px 11px / 4px 4px no-repeat,
    linear-gradient(-45deg, transparent 50%, #888 50%) 127px 11px / 4px 4px no-repeat;
}
.edit-type {
  display: flex;
  align-items: center;
  gap: 5px;
  height: 26px;
  margin-left: 5px;
}
.grid-wrap {
  flex: 1;
  min-height: 0;
  background: #fff;
}
.props {
  width: 215px;
  margin-left: 1px;
  table-layout: fixed;
  border-spacing: 0;
}
.c1 { width: 103px; }
.c2 { width: 101px; }
.c3 { width: 11px; }
.props td, .props th {
  height: 18px;
  padding: 0 0 0 2px;
  line-height: 15px;
  font-weight: normal;
  text-align: left;
  vertical-align: top;
  white-space: nowrap;
  border-bottom: 1px dotted #ddd;
  border-right: 1px dotted #ddd;
}
.props td:first-child {
  padding-left: 8px;
}
.props td:last-child {
  padding: 0;
  border-right: 0;
}
.props .group {
  background: #f2f2f2;
}
.props .group th, .props .group td {
  line-height: 17px;
  border-right: 0;
}
.props .group svg {
  margin-top: 3px;
}
.off {
  color: #a0a0a0;
}
.props .edit {
  padding: 0;
}
.props input[type="text"] {
  display: block;
  width: 100%;
  height: 17px;
  padding-left: 1px;
  border: 1px solid #000;
  background: #fff;
}
.props input[type="checkbox"] {
  display: block;
  appearance: none;
  width: 11px;
  height: 11px;
  margin: 4px 0 0 2px;
  border: 1px solid #666;
}
.props input:disabled {
  border-color: #c4c4c4;
}
.props input:checked {
  border-color: #777;
  background: #777;
}
.props input:checked::before {
  content: "";
  display: block;
  width: 7px;
  height: 4px;
  margin: 1px;
  border: solid #fff;
  border-width: 0 0 2px 2px;
  transform: rotate(-45deg);
}
.assoc {
  display: block;
  width: 9px;
  height: 15px;
  margin: 1px 1px 0;
  border: 1px solid #bbb;
  background: #f0f0f0;
}
.props-foot {
  display: flex;
  justify-content: space-between;
  height: 26px;
  padding: 0 3px 0 1px;
  line-height: 16px;
  background: #ededed;
}
.props-foot a {
  color: #0067a8;
}
.props-foot button {
  width: 70px;
  height: 18px;
  margin-top: 3px;
  border: 1px solid #cfcfcf;
  border-radius: 2px;
  color: #a8a8a8;
}

/* 3D view */
.viewport {
  flex: 1;
  min-width: 0;
  margin-left: 2px;
  display: flex;
  flex-direction: column;
  background: #fff;
}
.view-tabs {
  display: flex;
  height: 20px;
  flex: none;
  background: #cbcbcb;
}
.vtab {
  display: flex;
  align-items: center;
  gap: 7px;
  width: 128px;
  padding: 0 4px;
}
.vtab.active {
  background: #fff;
  font-weight: 600;
}
.vtab .x {
  margin-left: auto;
}
.tab-list {
  display: flex;
  align-items: center;
  width: 12px;
  margin-left: auto;
}
.view-body {
  flex: 1;
  min-height: 0;
  display: flex;
  padding: 2px 2px 0 2px;
}
.canvas {
  position: relative;
  flex: 1;
  min-width: 0;
  overflow: hidden;
}
.model {
  width: 100%;
  height: 100%;
}
.model path[stroke] {
  fill: none;
  stroke-width: 2;
}
.viewcube {
  position: absolute;
  top: 55px;
  right: 22px;
}
.viewcube text {
  font: bold 7px "Open Sans", sans-serif;
  fill: #8c8f96;
}
.navbar {
  position: absolute;
  top: 171px;
  right: 1px;
  width: 35px;
  height: 117px;
  border-radius: 5px;
  background: rgba(190, 202, 228, 0.6);
  box-shadow: inset 0 0 0 2px #7389bd;
}
.vscroll {
  width: 17px;
  display: flex;
  flex-direction: column;
  justify-content: space-between;
  align-items: center;
  background: #e8e8e8;
}
.sb {
  display: flex;
  align-items: center;
  justify-content: center;
  width: 17px;
  height: 17px;
  background: #f0f0f0;
  border: 0 solid #d4d4d4;
}
.sb::before {
  content: "";
  width: 6px;
  height: 6px;
  border: solid #888;
  border-width: 2px 2px 0 0;
}
.up::before { transform: translateY(2px) rotate(-45deg); }
.dn::before { transform: translateY(-2px) rotate(135deg); }
.lt::before { transform: rotate(-135deg); }
.rt::before { transform: rotate(45deg); }
.up { border-bottom-width: 1px; }
.dn { border-top-width: 1px; }
.thumb {
  width: 5px;
  height: 16px;
  border-radius: 2px;
  background: #d0d0d0;
}
.view-bar {
  display: flex;
  height: 19px;
  flex: none;
  padding: 0 2px 2px 2px;
}
.view-ctrl {
  display: flex;
  width: 442px;
  background: #f5f5f5;
}
.view-ctrl button {
  width: 26px;
  display: flex;
  align-items: center;
  justify-content: center;
  line-height: 16px;
}
.view-ctrl .scale {
  width: 80px;
  padding-left: 2px;
}
.hscroll {
  flex: 1;
  display: flex;
  align-items: center;
  justify-content: space-between;
  background: #e8e8e8;
}
.hscroll .thumb {
  width: 17px;
  height: 5px;
}
.grip {
  width: 17px;
  background:
    linear-gradient(#888, #888) 10px 5px / 2px 2px no-repeat,
    linear-gradient(#888, #888) 6px 10px / 2px 2px no-repeat,
    linear-gradient(#888, #888) 10px 10px / 2px 2px no-repeat,
    #f0f0f0;
}

/* project browser */
.browser {
  width: 195px;
  margin-left: 2px;
  overflow: hidden;
  background: #fff;
  border-left: 1px solid #ddd;
}
.browser .pane-head {
  padding-right: 0;
}
.browser .x {
  margin-right: -2px;
}
.search {
  display: flex;
  align-items: center;
  gap: 7px;
  height: 25px;
  margin: 8px 5px 8px 9px;
  padding-left: 8px;
  border: 1px solid #ddd;
}
.search input {
  width: 120px;
}
.search input::placeholder {
  color: #aaa;
}
.tree {
  line-height: 20px;
  white-space: nowrap;
  color: #505050;
}
.node {
  display: flex;
  align-items: center;
  height: 20px;
  padding-left: 5px;
}
.node svg {
  margin: 0 5px 0 8px;
}
.node b {
  width: 9px;
  height: 9px;
}
.minus {
  background: linear-gradient(#777, #777) center / 9px 2px no-repeat;
}
.plus {
  background: linear-gradient(#777, #777) center / 9px 2px no-repeat,
    linear-gradient(#777, #777) center / 2px 9px no-repeat;
}
.root {
  background: #f2f2f2;
  outline: 1px solid #ddd;
  outline-offset: -1px;
}
.lvl1 > li, .lvl2 > li {
  position: relative;
}
.lvl1 > li {
  padding-left: 16px;
}
.lvl1 b {
  margin-right: 9px;
}
.lvl2 > li {
  padding-left: 39px;
}
/* dashed guide lines */
.lvl1 > li::before, .lvl2 > li::before {
  content: "";
  position: absolute;
  top: 0;
  left: 9px;
  height: 100%;
  border-left: 1px dashed #b4b4b4;
}
.lvl1 > li:last-child::before, .lvl2 > li:last-child::before {
  height: 10px;
}
.lvl1 > li::after, .lvl2 > li::after {
  content: "";
  position: absolute;
  top: 10px;
  left: 9px;
  width: 9px;
  border-top: 1px dashed #b4b4b4;
}
.lvl2 > li::after {
  width: 25px;
}

/* status bar */
.status {
  display: flex;
  align-items: center;
  height: 24px;
  flex: none;
  padding-left: 4px;
  background: #f5f5f5;
}
.st {
  width: 26px;
  display: flex;
  align-items: center;
  justify-content: center;
}
.hint {
  width: 888px;
}
.st-mid {
  display: flex;
  align-items: center;
  margin-left: 199px;
  color: #999;
}
.chev {
  width: 6px;
  height: 6px;
  margin-right: 14px;
  border: solid #bbb;
  border-width: 0 1px 1px 0;
  transform: rotate(45deg);
}
.requests {
  display: flex;
  align-items: center;
  width: 46px;
}
.model-opt {
  width: 206px;
  height: 20px;
  margin-left: 7px;
  appearance: none;
  color: #999;
  opacity: 1;
  background: linear-gradient(45deg, transparent 50%, #bbb 50%) 190px 9px / 4px 4px no-repeat,
    linear-gradient(-45deg, transparent 50%, #bbb 50%) 194px 9px / 4px 4px no-repeat;
}
.st-right {
  display: flex;
  margin-left: auto;
  margin-right: 67px;
}
.filter {
  width: 32px;
}
```
